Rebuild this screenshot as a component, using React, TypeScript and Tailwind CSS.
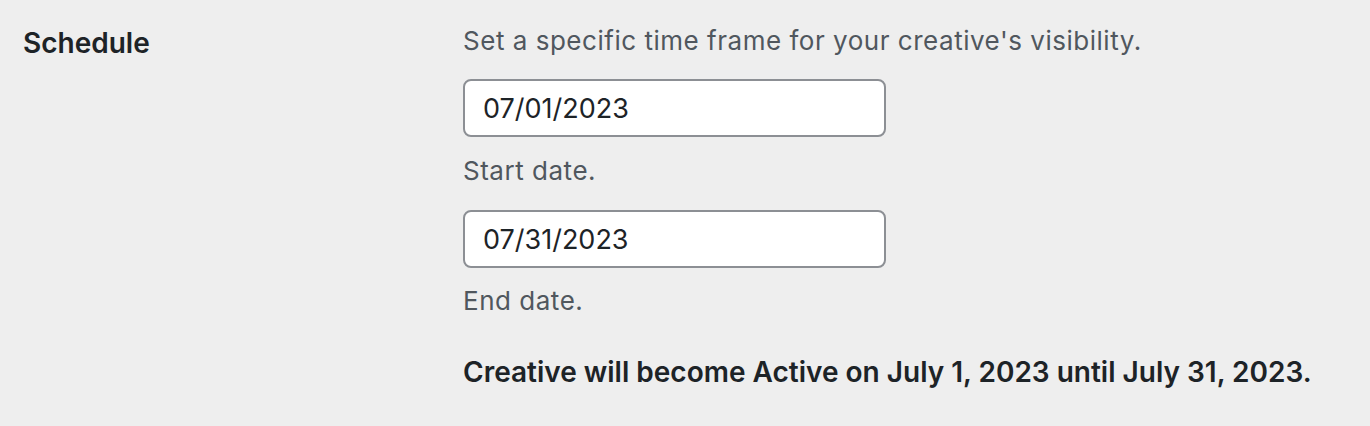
export default function App() {
  return (
    <div
      className="w-[1370px] h-[426px] bg-[#eeeeee] flex"
      style={{ fontFamily: "Inter, 'Liberation Sans', sans-serif" }}
    >
      <div className="w-[463px] pl-[23px] pt-[25px]">
        <h3 className="text-[28px] leading-[36px] font-semibold text-[#1d2327]">Schedule</h3>
      </div>
      <div className="flex flex-col pt-[24px]">
        <p className="text-[26px] leading-[34px] tracking-[0.02em] text-[#50575e]">
          Set a specific time frame for your creative's visibility.
        </p>
        <input
          type="text"
          defaultValue="07/01/2023"
          className="mt-[21px] w-[423px] h-[58px] bg-white border-2 border-[#8c8f94] rounded-[8px] px-[18px] text-[27px] text-[#1d2327] outline-none"
        />
        <p className="mt-[17px] text-[26px] leading-[34px] tracking-[0.02em] text-[#50575e]">Start date.</p>
        <input
          type="text"
          defaultValue="07/31/2023"
          className="mt-[22px] w-[423px] h-[58px] bg-white border-2 border-[#8c8f94] rounded-[8px] px-[18px] text-[27px] text-[#1d2327] outline-none"
        />
        <p className="mt-[16px] text-[26px] leading-[34px] tracking-[0.02em] text-[#50575e]">End date.</p>
        <p className="mt-[36px] text-[28px] leading-[36px] font-semibold text-[#1d2327]">
          Creative will become Active on July 1, 2023 until July 31, 2023.
        </p>
      </div>
    </div>
  );
}
